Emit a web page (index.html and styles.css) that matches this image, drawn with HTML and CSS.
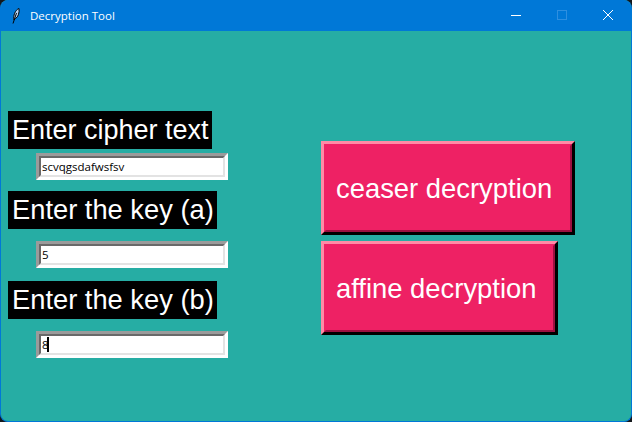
FILE: index.html
```html
<!DOCTYPE html>
<html>
<head>
    <title>Decryption Tool</title>
    <meta charset="utf-8">

    <link rel="stylesheet" href="styles.css">
</head>

<body>
    <div class="window">
        <div class="titlebar">
            <svg class="app_icon" width="16" height="16" viewBox="0 0 16 16">
                <path d="M6 12 C5 8 7 2 11 0.5 C11.5 4 10.5 9 7.5 10.5 Z" fill="#b9d3f2" stroke="#000" stroke-width="1"/>
                <path d="M5 15.5 L8.5 5" stroke="#000" stroke-width="1" fill="none"/>
            </svg>
            <span class="app_title">Decryption Tool</span>
            <div class="window_buttons">
                <div class="window_button">
                    <svg width="12" height="12" viewBox="0 0 12 12"><path d="M1 6.5 H11" stroke="#fff" stroke-width="1"/></svg>
                </div>
                <div class="window_button">
                    <svg width="12" height="12" viewBox="0 0 12 12"><rect x="1.5" y="1.5" width="9" height="9" fill="none" stroke="#2e8fe0" stroke-width="1"/></svg>
                </div>
                <div class="window_button">
                    <svg width="12" height="12" viewBox="0 0 12 12"><path d="M1 1 L11 11 M11 1 L1 11" stroke="#fff" stroke-width="1"/></svg>
                </div>
            </div>
        </div>

        <div class="content">
            <div class="form_column">
                <div class="label">Enter cipher text</div>
                <div class="entry entry_first">
                    <input class="entry_input" type="text" value="scvqgsdafwsfsv">
                </div>
                <div class="label label_second">Enter the key (a)</div>
                <div class="entry entry_second">
                    <input class="entry_input" type="text" value="5">
                </div>
                <div class="label label_third">Enter the key (b)</div>
                <div class="entry entry_third">
                    <input class="entry_input" type="text" value="8">
                    <div class="caret"></div>
                </div>
            </div>

            <div class="button_column">
                <div class="decrypt_button">
                    <button class="decrypt_button_face ceaser" type="button">ceaser decryption</button>
                </div>
                <div class="decrypt_button">
                    <button class="decrypt_button_face affine" type="button">affine decryption</button>
                </div>
            </div>
        </div>
    </div>
</body>
</html>
```

FILE: styles.css
```css
html, body {
    margin: 0;
    height: 100%;
    background-color: #14181c;
}

.window {
    box-sizing: border-box;
    width: 632px;
    height: 422px;
    border: 1px solid #0078d7;
    border-top: 0;
    border-radius: 8px;
    overflow: hidden;
    background-color: #26ada4;
    display: flex;
    flex-direction: column;
}

.titlebar {
    height: 31px;
    flex: none;
    background-color: #0078d7;
    display: flex;
    align-items: center;
    padding-left: 7px;
    color: #fff;
}

.app_icon {
    margin-right: 6px;
    flex: none;
}

.app_title {
    font-family: "Open Sans", sans-serif;
    font-size: 11.5px;
}

.window_buttons {
    margin-left: auto;
    display: flex;
}

.window_button {
    box-sizing: border-box;
    width: 46px;
    height: 31px;
    padding-bottom: 1px;
    display: flex;
    align-items: center;
    justify-content: center;
}

.content {
    flex: 1;
    display: flex;
}

.form_column {
    width: 313px;
    padding: 80px 0 0 7px;
    display: flex;
    flex-direction: column;
    align-items: flex-start;
}

.label {
    height: 38px;
    line-height: 38px;
    padding: 0 3px 0 4px;
    background-color: #000;
    color: #fff;
    font-family: "Liberation Sans", sans-serif;
    font-size: 27px;
    white-space: nowrap;
}

.label_second {
    margin-top: 11px;
    font-size: 27.3px;
}

.label_third {
    margin-top: 13px;
    font-size: 27.3px;
}

.entry {
    position: relative;
    box-sizing: border-box;
    width: 192px;
    height: 27px;
    margin-left: 28px;
    border: 3px solid;
    border-color: #9b9b9b #fff #fff #9b9b9b;
}

.entry_first {
    margin-top: 4px;
}

.entry_second,
.entry_third {
    margin-top: 12px;
}

.entry_input {
    box-sizing: border-box;
    display: block;
    width: 100%;
    height: 100%;
    padding: 0 0 0 1px;
    border: 2px solid;
    border-color: #696969 #e3e3e3 #e3e3e3 #696969;
    border-radius: 0;
    outline: none;
    background-color: #fff;
    color: #000;
    font-family: "Open Sans", sans-serif;
    font-size: 11.5px;
}

.caret {
    position: absolute;
    left: 8px;
    top: 3px;
    width: 2px;
    height: 15px;
    background-color: #000;
}

.button_column {
    padding-top: 110px;
    display: flex;
    flex-direction: column;
    align-items: flex-start;
    gap: 6px;
}

.decrypt_button {
    border: 3px solid;
    border-color: #ff8aa6 #000 #000 #ff8aa6;
}

.decrypt_button_face {
    box-sizing: border-box;
    display: block;
    height: 88px;
    padding: 1px 0 0 10px;
    border: 2px solid;
    border-color: #ee2164 #9c1040 #9c1040 #ee2164;
    background-color: #ee2164;
    color: #fff;
    font-family: "Liberation Sans", sans-serif;
    font-size: 27.4px;
    text-align: left;
}

.ceaser {
    width: 248px;
}

.affine {
    width: 231px;
}
```
